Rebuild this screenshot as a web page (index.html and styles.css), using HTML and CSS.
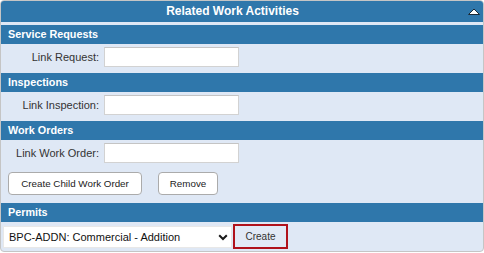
FILE: index.html
```html
<!DOCTYPE html>
<html lang="en">
<head>
    <meta charset="UTF-8">
    <title>Related Work Activities</title>
    <link rel="stylesheet" href="styles.css">
</head>
<body>
    <div class="panel">
        <div class="panel-title">
            <span>Related Work Activities</span>
            <svg class="collapse-icon" width="12" height="7" viewBox="0 0 12 7">
                <polygon points="0.5,6.5 6,1 11.5,6.5" fill="#fff" stroke="#1b2b38" stroke-width="1"/>
            </svg>
        </div>
        <div class="panel-body">
            <div class="section-head">Service Requests</div>
            <div class="field-row">
                <label for="linkRequest">Link Request:</label>
                <input type="text" id="linkRequest">
            </div>

            <div class="section-head">Inspections</div>
            <div class="field-row">
                <label for="linkInspection">Link Inspection:</label>
                <input type="text" id="linkInspection">
            </div>

            <div class="section-head">Work Orders</div>
            <div class="field-row">
                <label for="linkWorkOrder">Link Work Order:</label>
                <input type="text" id="linkWorkOrder">
            </div>
            <div class="button-row">
                <button class="btn btn-child">Create Child Work Order</button>
                <button class="btn btn-remove">Remove</button>
            </div>

            <div class="section-head">Permits</div>
            <div class="permit-row">
                <div class="select-wrap">
                    <select id="permitType">
                        <option>BPC-ADDN: Commercial - Addition</option>
                    </select>
                    <svg class="chevron" width="10" height="7" viewBox="0 0 10 7">
                        <path d="M1.2 1.2 L5 5 L8.8 1.2" fill="none" stroke="#1a1a1a" stroke-width="2"/>
                    </svg>
                </div>
                <button class="btn-create">Create</button>
            </div>
        </div>
    </div>
</body>
</html>
```

FILE: styles.css
```css
body {
    margin: 0;
    font-family: "Liberation Sans", Arial, sans-serif;
    color: #222;
}
.panel {
    width: 482px;
    border: 1px solid #c5c5c5;
    border-radius: 4px;
    background-color: #dfe8f5;
    overflow: hidden;
}
.panel-title {
    position: relative;
    height: 21px;
    line-height: 21px;
    background-color: #2f77ab;
    color: #fff;
    font-weight: bold;
    font-size: 12px;
    text-align: center;
    padding-right: 19px;
}
.collapse-icon {
    position: absolute;
    right: 3px;
    top: 7px;
}
.panel-body {
    padding-top: 3px;
}
.section-head {
    height: 19px;
    line-height: 19px;
    background-color: #2f77ab;
    color: #fff;
    font-weight: bold;
    font-size: 10.8px;
    padding-left: 7px;
}
.field-row {
    display: flex;
    align-items: center;
    padding: 3px 0 6px;
}
.field-row label {
    width: 98px;
    margin-right: 5px;
    text-align: right;
    font-size: 11px;
    color: #333;
}
.field-row input {
    box-sizing: border-box;
    width: 135px;
    height: 20px;
    margin: 0;
    border: 1px solid #d2d2d2;
    border-top-color: #c4c4c4;
    background-color: #fff;
    padding: 1px 3px;
}
.button-row {
    display: flex;
    gap: 16px;
    padding: 3px 0 8px 7px;
}
.btn {
    box-sizing: border-box;
    height: 23px;
    background-color: #fff;
    border: 1px solid #ababab;
    border-radius: 4px;
    font-family: "Liberation Sans", Arial, sans-serif;
    font-size: 9.8px;
    color: #222;
    padding: 0;
}
.btn-child {
    width: 134px;
}
.btn-remove {
    width: 60px;
}
.permit-row {
    display: flex;
    align-items: center;
    padding: 2px 0 2px 2px;
    gap: 1px;
}
.select-wrap {
    position: relative;
}
.select-wrap select {
    appearance: none;
    -webkit-appearance: none;
    box-sizing: border-box;
    width: 229px;
    height: 22px;
    margin: 0;
    border: 1px solid #e8e8e8;
    background-color: #fff;
    font-family: "Liberation Sans", Arial, sans-serif;
    font-size: 11px;
    color: #111;
    padding: 0 0 0 5px;
}
.chevron {
    position: absolute;
    right: 4px;
    top: 8px;
    pointer-events: none;
}
.btn-create {
    box-sizing: border-box;
    width: 55px;
    height: 25px;
    border: 2px solid #b0121b;
    background-color: #e2eaf6;
    font-family: "Liberation Sans", Arial, sans-serif;
    font-size: 10px;
    color: #333;
    padding: 0;
}
```
